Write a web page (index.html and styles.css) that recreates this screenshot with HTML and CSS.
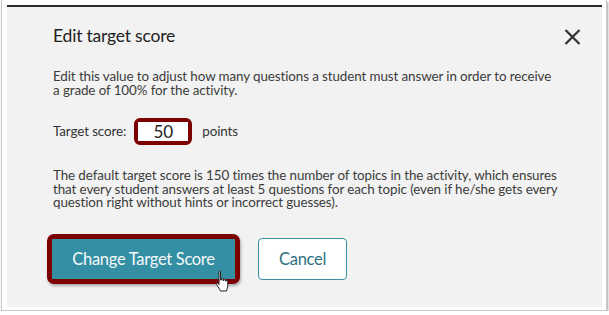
FILE: index.html
```html
<!DOCTYPE html>
<html>
<head>
<meta charset="utf-8">
<link rel="stylesheet" href="styles.css">
</head>
<body>
<div class="frame">
  <div class="dialog">
    <div class="header">
      <h1 class="title">Edit target score</h1>
      <button class="close" aria-label="Close">
        <svg width="17" height="16" viewBox="0 0 17 16"><path d="M1.5 1 L15.5 15 M15.5 1 L1.5 15" stroke="#333" stroke-width="2.2" fill="none"/></svg>
      </button>
    </div>
    <p class="text first">Edit this value to adjust how many questions a student must answer in order to receive a grade of 100% for the activity.</p>
    <div class="score-row">
      <span class="label">Target score:</span>
      <span class="highlight small"><span class="input">50</span></span>
      <span class="label">points</span>
    </div>
    <p class="text second">The default target score is 150 times the number of topics in the activity, which ensures that every student answers at least 5 questions for each topic (even if he/she gets every question right without hints or incorrect guesses).</p>
    <div class="actions">
      <span class="highlight big"><button class="primary">Change Target Score</button></span>
      <button class="secondary">Cancel</button>
      <svg class="cursor" width="18" height="24" viewBox="0 0 18 24">
        <path d="M6 1.5 C6 0.8 7.5 0.8 7.5 1.5 L7.5 10 L8.5 10 L8.5 8.5 C8.5 7.8 10 7.8 10 8.5 L10 10.5 L11 10.5 L11 9.5 C11 8.8 12.5 8.8 12.5 9.5 L12.5 11 L13.3 11 C13.3 10.4 14.8 10.4 14.8 11 L14.8 16 C14.8 18 13.5 19.5 13.5 21 L7.5 21 C7 19.5 5 17 3.5 14.5 C2.8 13.3 4 12.6 4.8 13.4 L6 14.6 Z" fill="#fff" stroke="#222" stroke-width="1"/>
      </svg>
    </div>
  </div>
</div>
</body>
</html>
```
FILE: styles.css
```css
* { box-sizing: border-box; }
html, body { margin: 0; padding: 0; background: #fff; }
body { font-family: "Lato", "Source Sans Pro", "Liberation Sans", sans-serif; }

.frame {
  margin-left: 1px;
  width: 606px;
  height: 311px;
  border: 1px solid #c9c9c9;
  border-top: none;
  padding: 5px 4px 3px 5px;
  box-shadow: 1px 2px 2px rgba(0,0,0,0.35);
}

.dialog {
  height: 302px;
  background: #f2f2f2;
  border-top: 2px solid #2a2a2a;
  padding: 0 21px 0 46px;
}

.header {
  display: flex;
  justify-content: space-between;
  align-items: center;
  padding-top: 16px;
  height: 42px;
}

.title {
  margin: 0;
  font-size: 17.5px;
  font-weight: 400;
  color: #222;
  letter-spacing: -0.2px;
  line-height: 24px;
}

.close {
  border: 0;
  background: none;
  padding: 0;
  width: 17px;
  height: 16px;
  display: block;
  margin-top: 1px;
}
.close svg { display: block; }

.text {
  margin: 0;
  font-size: 13.4px;
  line-height: 13.6px;
  color: #3c3c3c;
  letter-spacing: -0.1px;
  width: 507px;
}
.text.first { margin-top: 21px; }
.text.second { margin-top: 24px; }

.score-row {
  display: flex;
  align-items: center;
  margin-top: 20px;
  height: 28px;
  font-size: 13.4px;
  color: #333;
}
.label { letter-spacing: -0.1px; }

.highlight {
  display: inline-block;
  border: 4px solid #7d0000;
  background: #7d0000;
}
.highlight.small {
  margin: 0 10px 0 8px;
  border-radius: 6px;
  width: 58px;
  height: 27px;
  border-width: 4px;
}
.input {
  display: block;
  background: #fff;
  height: 19px;
  text-align: center;
  font-size: 17px;
  line-height: 19px;
  color: #222;
}

.actions {
  position: relative;
  display: flex;
  align-items: center;
  margin-top: 24px;
  gap: 18px;
  margin-left: -6px;
}

.highlight.big {
  border-width: 5px;
  border-radius: 7px;
  box-shadow: 1px 2px 3px rgba(0,0,0,0.3);
}

.primary {
  display: block;
  width: 183px;
  height: 40px;
  border: 0;
  background: #348fa4;
  color: #f4f8f9;
  font-family: inherit;
  font-size: 16.5px;
  letter-spacing: -0.3px;
  padding: 0;
}

.secondary {
  width: 89px;
  height: 42px;
  border: 1px solid #3a8fa3;
  border-radius: 4px;
  background: #fff;
  color: #2e6f80;
  font-family: inherit;
  font-size: 16.5px;
  letter-spacing: -0.3px;
  padding: 0;
}

.cursor {
  position: absolute;
  left: 166px;
  top: 36px;
}
```
